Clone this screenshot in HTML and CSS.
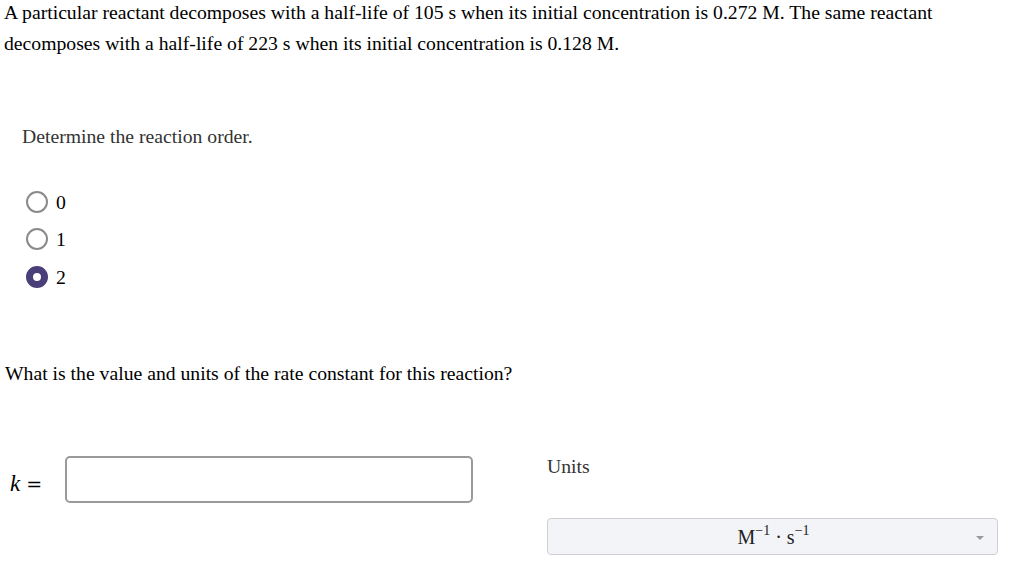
FILE: index.html
```
<!DOCTYPE html>
<html>
<head>
<meta charset="utf-8">
<link rel="stylesheet" href="styles.css">
</head>
<body>
<p class="intro">A particular reactant decomposes with a half-life of 105 s when its initial concentration is 0.272 M. The same reactant decomposes with a half-life of 223 s when its initial concentration is 0.128 M.</p>
<div class="part1">
  <p class="prompt">Determine the reaction order.</p>
  <ul class="choices">
    <li class="choice"><span class="radio"></span><span class="label">0</span></li>
    <li class="choice"><span class="radio"></span><span class="label">1</span></li>
    <li class="choice"><span class="radio checked"></span><span class="label">2</span></li>
  </ul>
</div>
<p class="question">What is the value and units of the rate constant for this reaction?</p>
<div class="answer">
  <div class="value">
    <span class="kvar"><i>k</i> =</span>
    <div class="input"></div>
  </div>
  <div class="units">
    <div class="units-label">Units</div>
    <div class="select">
      <span class="select-text">M<sup>−1</sup> · s<sup>−1</sup></span>
      <span class="arrow"></span>
    </div>
  </div>
</div>
</body>
</html>
```
FILE: styles.css
```
html, body {
  margin: 0;
  padding: 0;
  background: #fff;
}
body {
  font-family: "Liberation Serif", "Times New Roman", serif;
  font-size: 19.7px;
  color: #000;
}
.intro {
  margin: -3px 0 0 0;
  padding: 0 4px;
  line-height: 31px;
}
.part1 {
  padding-left: 22px;
  margin-top: 62px;
}
.prompt {
  margin: 0;
  color: #333;
  line-height: 31px;
}
.choices {
  list-style: none;
  margin: 31px 0 0 0;
  padding: 0 0 0 4px;
}
.choice {
  display: flex;
  align-items: center;
  height: 37.5px;
}
.radio {
  box-sizing: border-box;
  width: 22px;
  height: 22px;
  border-radius: 50%;
  border: 2px solid #8a8a8a;
  background: #fff;
  margin-right: 8px;
}
.radio.checked {
  border: 7px solid #4a3f78;
  background: #fff;
}
.label {
  line-height: 20px;
}
.question {
  margin: 62px 0 0 0;
  padding-left: 5px;
  line-height: 31px;
}
.answer {
  display: flex;
  margin-top: 65px;
}
.value {
  display: flex;
  align-items: center;
  width: 547px;
  padding-top: 2px;
  height: 47px;
}
.kvar {
  font-family: "DejaVu Serif", serif;
  font-size: 19px;
  width: 65px;
  padding-left: 10px;
  box-sizing: border-box;
  margin-top: 10px;
}
.kvar i {
  font-family: "Liberation Serif", serif;
  font-size: 23px;
}
.input {
  box-sizing: border-box;
  width: 408px;
  height: 47px;
  border: 2px solid #9a9a9a;
  border-radius: 5px;
  background: #fff;
}
.units {
  display: flex;
  flex-direction: column;
}
.units-label {
  color: #333;
  line-height: 20px;
  margin-top: 2px;
}
.select {
  position: relative;
  box-sizing: border-box;
  margin-top: 42px;
  width: 451px;
  height: 37px;
  border: 1px solid #cfcfd4;
  border-radius: 4px;
  background: #f3f4f8;
  display: flex;
  align-items: center;
  justify-content: center;
}
.select-text {
  color: #222;
  font-size: 20px;
  margin-left: 2px;
  margin-top: 2px;
}
.select-text sup {
  font-size: 14px;
  vertical-align: 9px;
  line-height: 0;
}
.arrow {
  position: absolute;
  right: 13px;
  top: 17px;
  width: 0;
  height: 0;
  border-left: 4px solid transparent;
  border-right: 4px solid transparent;
  border-top: 4px solid #999;
}
```
